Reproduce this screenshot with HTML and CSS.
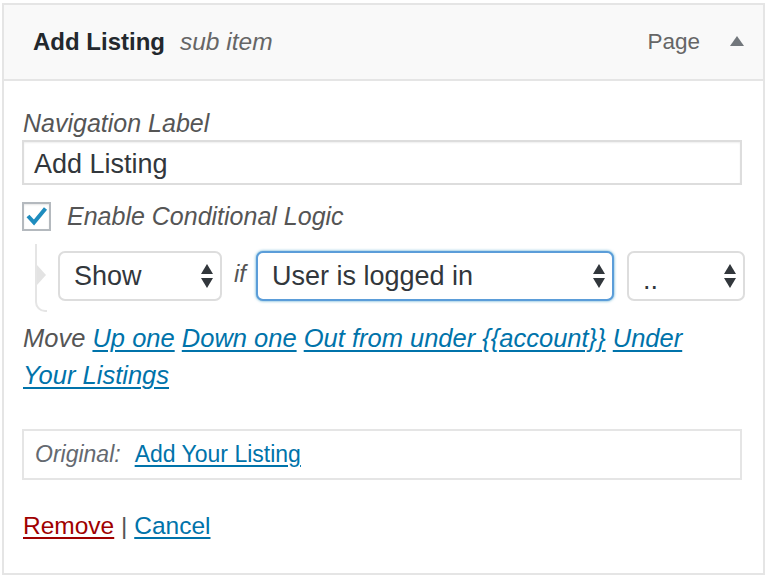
FILE: index.html
```html
<!DOCTYPE html>
<html lang="en">
<head>
<meta charset="utf-8">
<title>Menu item</title>
<link rel="stylesheet" href="styles.css">
</head>
<body>
<div class="panel">
  <div class="panel-head">
    <div class="title"><span class="title-main">Add Listing</span><span class="title-sub">sub item</span></div>
    <div class="head-right">
      <span class="item-type">Page</span>
      <span class="toggle-arrow"></span>
    </div>
  </div>
  <div class="panel-body">
    <div class="field-label">Navigation Label</div>
    <div class="text-input">Add Listing</div>

    <div class="check-row">
      <span class="checkbox">
        <svg width="25" height="25" viewBox="0 0 25 25"><polyline points="4,12 10,18.5 21.5,4.5" fill="none" stroke="#1e8cbe" stroke-width="4" stroke-linecap="butt" stroke-linejoin="miter"/></svg>
      </span>
      <span class="check-label">Enable Conditional Logic</span>
    </div>

    <div class="cond-row">
      <div class="rail"><span class="rail-tri"></span></div>
      <div class="cond-controls">
        <div class="select sel-show"><span>Show</span>
          <svg class="arrows" width="12" height="24" viewBox="0 0 12 24"><polygon points="6,0 12,10 0,10" fill="#32373c"/><polygon points="0,14 12,14 6,24" fill="#32373c"/></svg>
        </div>
        <span class="if-word">if</span>
        <div class="select sel-user focused"><span>User is logged in</span>
          <svg class="arrows" width="12" height="24" viewBox="0 0 12 24"><polygon points="6,0 12,10 0,10" fill="#32373c"/><polygon points="0,14 12,14 6,24" fill="#32373c"/></svg>
        </div>
        <div class="select sel-dots"><span>..</span>
          <svg class="arrows" width="12" height="24" viewBox="0 0 12 24"><polygon points="6,0 12,10 0,10" fill="#32373c"/><polygon points="0,14 12,14 6,24" fill="#32373c"/></svg>
        </div>
      </div>
    </div>

    <div class="move-links">Move <a href="#">Up one</a> <a href="#">Down one</a> <a href="#">Out from under {{account}}</a> <a href="#">Under<br>Your Listings</a></div>

    <div class="original-box"><span class="orig-label">Original:</span><a href="#" class="orig-link">Add Your Listing</a></div>

    <div class="actions"><a href="#" class="remove">Remove</a> <span class="sep">|</span> <a href="#" class="cancel">Cancel</a></div>
  </div>
</div>
</body>
</html>
```

FILE: styles.css
```css
html, body {
  margin: 0;
  padding: 0;
  background: #ffffff;
}

body {
  font-family: "Liberation Sans", Arial, Helvetica, sans-serif;
  color: #32373c;
}

.panel {
  margin: 3px 0 0 2px;
  width: 763px;
  box-sizing: border-box;
  border: 2px solid #e5e5e5;
  background: #ffffff;
}

.panel-head {
  height: 76px;
  box-sizing: border-box;
  background: #f9f9f9;
  border-bottom: 2px solid #e5e5e5;
  display: flex;
  align-items: center;
  justify-content: space-between;
  padding: 0 19px 0 29px;
}

.title {
  font-size: 24px;
  display: flex;
  align-items: baseline;
}

.title-main {
  font-weight: bold;
  color: #23282d;
}

.title-sub {
  font-style: italic;
  color: #666666;
  margin-left: 15px;
  font-size: 24.5px;
}

.head-right {
  display: flex;
  align-items: center;
}

.item-type {
  font-size: 22.5px;
  color: #666666;
}

.toggle-arrow {
  width: 0;
  height: 0;
  margin-left: 30px;
  margin-top: -2px;
  border-left: 7px solid transparent;
  border-right: 7px solid transparent;
  border-bottom: 10px solid #72777c;
}

.panel-body {
  padding: 27px 21px 29px 18px;
}

.field-label {
  font-size: 25px;
  line-height: 30px;
  font-style: italic;
  color: #555555;
  padding-left: 1px;
}

.text-input {
  margin-top: 2px;
  height: 45px;
  box-sizing: border-box;
  border: 2px solid #dddddd;
  box-shadow: inset 0 1px 2px rgba(0, 0, 0, 0.07);
  padding-left: 10px;
  font-size: 27px;
  line-height: 45px;
  color: #32373c;
}

.check-row {
  margin-top: 17px;
  display: flex;
  align-items: center;
  height: 29px;
}

.checkbox {
  flex: 0 0 auto;
  width: 29px;
  height: 29px;
  box-sizing: border-box;
  border: 2px solid #b4b9be;
  background: #ffffff;
  box-shadow: inset 0 1px 2px rgba(0, 0, 0, 0.1);
  display: flex;
  align-items: center;
  justify-content: center;
}

.check-label {
  margin-left: 16px;
  font-size: 25px;
  font-style: italic;
  color: #555555;
}

.cond-row {
  margin-top: 13px;
  margin-left: 13px;
  display: flex;
  align-items: stretch;
}

.rail {
  flex: 0 0 auto;
  width: 12px;
  box-sizing: border-box;
  border-left: 2px solid #e5e5e5;
  border-bottom: 2px solid #e5e5e5;
  border-bottom-left-radius: 10px;
  display: flex;
  align-items: center;
}

.rail-tri {
  width: 0;
  height: 0;
  border-top: 10px solid transparent;
  border-bottom: 10px solid transparent;
  border-left: 9px solid #e3e3e3;
  margin-top: -4px;
}

.cond-controls {
  flex: 0 0 auto;
  display: flex;
  align-items: center;
  padding: 7px 0 11px 11px;
}

.select {
  flex: 0 0 auto;
  height: 50px;
  box-sizing: border-box;
  border: 2px solid #dddddd;
  border-radius: 7px;
  background: #ffffff;
  display: flex;
  align-items: center;
  justify-content: space-between;
  padding: 0 7px 0 14px;
  font-size: 27px;
  color: #32373c;
}

.select span {
  line-height: 1;
  margin-top: 1px;
}

.arrows {
  flex: 0 0 auto;
  margin-top: 0;
}

.sel-show {
  width: 164px;
}

.sel-user {
  width: 358px;
  margin-left: 10px;
}

.sel-dots {
  width: 118px;
  margin-left: 13px;
}

.sel-dots span {
  margin-top: 8px;
}

.focused {
  border-color: #5b9dd9;
  box-shadow: 0 0 3px rgba(30, 140, 190, 0.8);
}

.if-word {
  margin-left: 12px;
  font-size: 24px;
  font-style: italic;
  color: #555555;
  align-self: flex-start;
  margin-top: 9px;
}

.move-links {
  margin-top: 8px;
  font-size: 25.5px;
  line-height: 37px;
  font-style: italic;
  color: #555555;
  padding-left: 1px;
}

a {
  color: #0073aa;
  text-decoration: underline;
  text-decoration-thickness: 2px;
  text-underline-offset: 3px;
}

.original-box {
  margin-top: 35px;
  height: 51px;
  box-sizing: border-box;
  border: 2px solid #e5e5e5;
  display: flex;
  align-items: center;
  padding-left: 11px;
  font-size: 23px;
}

.orig-label {
  font-style: italic;
  color: #646970;
}

.orig-link {
  margin-left: 14px;
}

.actions {
  margin-top: 27px;
  font-size: 24.5px;
  line-height: 37px;
  color: #555555;
  padding-left: 1px;
}

.remove {
  color: #a00000;
}

.sep {
  color: #555555;
}
```
